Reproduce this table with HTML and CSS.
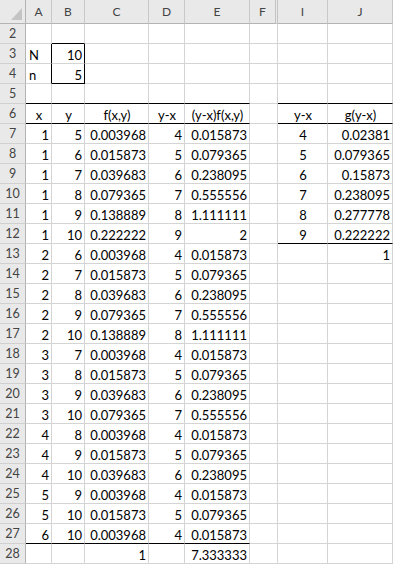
FILE: index.html
```html
<!DOCTYPE html>
<html>
<head>
<meta charset="utf-8">
<link rel="stylesheet" href="styles.css">
</head>
<body>
<div class="sheet">
  <div class="c h corner"><svg width="12" height="13" viewBox="0 0 12 13"><polygon points="11,0 11,12 0,12" fill="#c4c4c4"/></svg></div>
  <div class="c h">A</div><div class="c h">B</div><div class="c h">C</div><div class="c h">D</div><div class="c h">E</div><div class="c h hf">F</div><div class="c h">I</div><div class="c h">J</div>

  <div class="c rh">2</div><div class="c"></div><div class="c bb"></div><div class="c"></div><div class="c"></div><div class="c"></div><div class="c"></div><div class="c"></div><div class="c"></div>
  <div class="c rh">3</div><div class="c l br">N</div><div class="c br">10</div><div class="c"></div><div class="c"></div><div class="c"></div><div class="c"></div><div class="c"></div><div class="c"></div>
  <div class="c rh">4</div><div class="c l br">n</div><div class="c br bb">5</div><div class="c"></div><div class="c"></div><div class="c"></div><div class="c"></div><div class="c"></div><div class="c"></div>
  <div class="c rh">5</div><div class="c bb"></div><div class="c bb"></div><div class="c bb"></div><div class="c bb"></div><div class="c bb"></div><div class="c"></div><div class="c bb"></div><div class="c bb"></div>
  <div class="c rh">6</div><div class="c m bb">x</div><div class="c m bb">y</div><div class="c m bb">f(x,y)</div><div class="c m bb">y-x</div><div class="c m bb">(y-x)f(x,y)</div><div class="c"></div><div class="c m bb">y-x</div><div class="c m bb">g(y-x)</div>
  <div class="c rh">7</div><div class="c">1</div><div class="c">5</div><div class="c">0.003968</div><div class="c">4</div><div class="c">0.015873</div><div class="c"></div><div class="c m">4</div><div class="c">0.02381</div>
  <div class="c rh">8</div><div class="c">1</div><div class="c">6</div><div class="c">0.015873</div><div class="c">5</div><div class="c">0.079365</div><div class="c"></div><div class="c m">5</div><div class="c">0.079365</div>
  <div class="c rh">9</div><div class="c">1</div><div class="c">7</div><div class="c">0.039683</div><div class="c">6</div><div class="c">0.238095</div><div class="c"></div><div class="c m">6</div><div class="c">0.15873</div>
  <div class="c rh">10</div><div class="c">1</div><div class="c">8</div><div class="c">0.079365</div><div class="c">7</div><div class="c">0.555556</div><div class="c"></div><div class="c m">7</div><div class="c">0.238095</div>
  <div class="c rh">11</div><div class="c">1</div><div class="c">9</div><div class="c">0.138889</div><div class="c">8</div><div class="c">1.111111</div><div class="c"></div><div class="c m">8</div><div class="c">0.277778</div>
  <div class="c rh">12</div><div class="c">1</div><div class="c">10</div><div class="c">0.222222</div><div class="c">9</div><div class="c">2</div><div class="c"></div><div class="c m bb">9</div><div class="c bb">0.222222</div>
  <div class="c rh">13</div><div class="c">2</div><div class="c">6</div><div class="c">0.003968</div><div class="c">4</div><div class="c">0.015873</div><div class="c"></div><div class="c"></div><div class="c">1</div>
  <div class="c rh">14</div><div class="c">2</div><div class="c">7</div><div class="c">0.015873</div><div class="c">5</div><div class="c">0.079365</div><div class="c"></div><div class="c"></div><div class="c"></div>
  <div class="c rh">15</div><div class="c">2</div><div class="c">8</div><div class="c">0.039683</div><div class="c">6</div><div class="c">0.238095</div><div class="c"></div><div class="c"></div><div class="c"></div>
  <div class="c rh">16</div><div class="c">2</div><div class="c">9</div><div class="c">0.079365</div><div class="c">7</div><div class="c">0.555556</div><div class="c"></div><div class="c"></div><div class="c"></div>
  <div class="c rh">17</div><div class="c">2</div><div class="c">10</div><div class="c">0.138889</div><div class="c">8</div><div class="c">1.111111</div><div class="c"></div><div class="c"></div><div class="c"></div>
  <div class="c rh">18</div><div class="c">3</div><div class="c">7</div><div class="c">0.003968</div><div class="c">4</div><div class="c">0.015873</div><div class="c"></div><div class="c"></div><div class="c"></div>
  <div class="c rh">19</div><div class="c">3</div><div class="c">8</div><div class="c">0.015873</div><div class="c">5</div><div class="c">0.079365</div><div class="c"></div><div class="c"></div><div class="c"></div>
  <div class="c rh">20</div><div class="c">3</div><div class="c">9</div><div class="c">0.039683</div><div class="c">6</div><div class="c">0.238095</div><div class="c"></div><div class="c"></div><div class="c"></div>
  <div class="c rh">21</div><div class="c">3</div><div class="c">10</div><div class="c">0.079365</div><div class="c">7</div><div class="c">0.555556</div><div class="c"></div><div class="c"></div><div class="c"></div>
  <div class="c rh">22</div><div class="c">4</div><div class="c">8</div><div class="c">0.003968</div><div class="c">4</div><div class="c">0.015873</div><div class="c"></div><div class="c"></div><div class="c"></div>
  <div class="c rh">23</div><div class="c">4</div><div class="c">9</div><div class="c">0.015873</div><div class="c">5</div><div class="c">0.079365</div><div class="c"></div><div class="c"></div><div class="c"></div>
  <div class="c rh">24</div><div class="c">4</div><div class="c">10</div><div class="c">0.039683</div><div class="c">6</div><div class="c">0.238095</div><div class="c"></div><div class="c"></div><div class="c"></div>
  <div class="c rh">25</div><div class="c">5</div><div class="c">9</div><div class="c">0.003968</div><div class="c">4</div><div class="c">0.015873</div><div class="c"></div><div class="c"></div><div class="c"></div>
  <div class="c rh">26</div><div class="c">5</div><div class="c">10</div><div class="c">0.015873</div><div class="c">5</div><div class="c">0.079365</div><div class="c"></div><div class="c"></div><div class="c"></div>
  <div class="c rh">27</div><div class="c bb">6</div><div class="c bb">10</div><div class="c bb">0.003968</div><div class="c bb">4</div><div class="c bb">0.015873</div><div class="c"></div><div class="c"></div><div class="c"></div>
  <div class="c rh">28</div><div class="c"></div><div class="c"></div><div class="c">1</div><div class="c"></div><div class="c">7.333333</div><div class="c"></div><div class="c"></div><div class="c"></div>
</div>
</body>
</html>
```
FILE: styles.css
```css
* { box-sizing: border-box; }
html, body { margin: 0; padding: 0; background: #fff; }
body {
  font-family: Lato, "Liberation Sans", sans-serif;
  font-size: 13px;
  color: #000;
}
.sheet {
  display: grid;
  grid-template-columns: 26px 26px 33px 64px 36px 65px 28px 50px 65px;
  grid-template-rows: 24px;
  grid-auto-rows: 20px;
  width: 393px;
}
.c {
  border-right: 1px solid #d4d4d4;
  border-bottom: 1px solid #d4d4d4;
  display: flex;
  align-items: flex-end;
  justify-content: flex-end;
  padding: 0 2px 1px 3px;
  line-height: 14px;
  white-space: nowrap;
  overflow: hidden;
}
.l { justify-content: flex-start; }
.m { justify-content: center; }
.bb { border-bottom-color: #000; }
.br { border-right-color: #000; }
.h {
  background: #e9e9e9;
  color: #444;
  font-size: 12px;
  justify-content: center;
  align-items: center;
  padding: 0;
  border-right-color: #c8c8c8;
  border-bottom-color: #b4b4b4;
}
.hf { border-right: 3px double #c4c4c4; }
.corner {
  justify-content: flex-end;
  align-items: flex-end;
  padding: 0 2px 2px 0;
  border-right-color: #b4b4b4;
}
.rh {
  background: #e9e9e9;
  color: #444;
  font-size: 12.5px;
  justify-content: center;
  padding: 0 0 2px 0;
  border-right-color: #b4b4b4;
  border-bottom-color: #d0d0d0;
}
```
